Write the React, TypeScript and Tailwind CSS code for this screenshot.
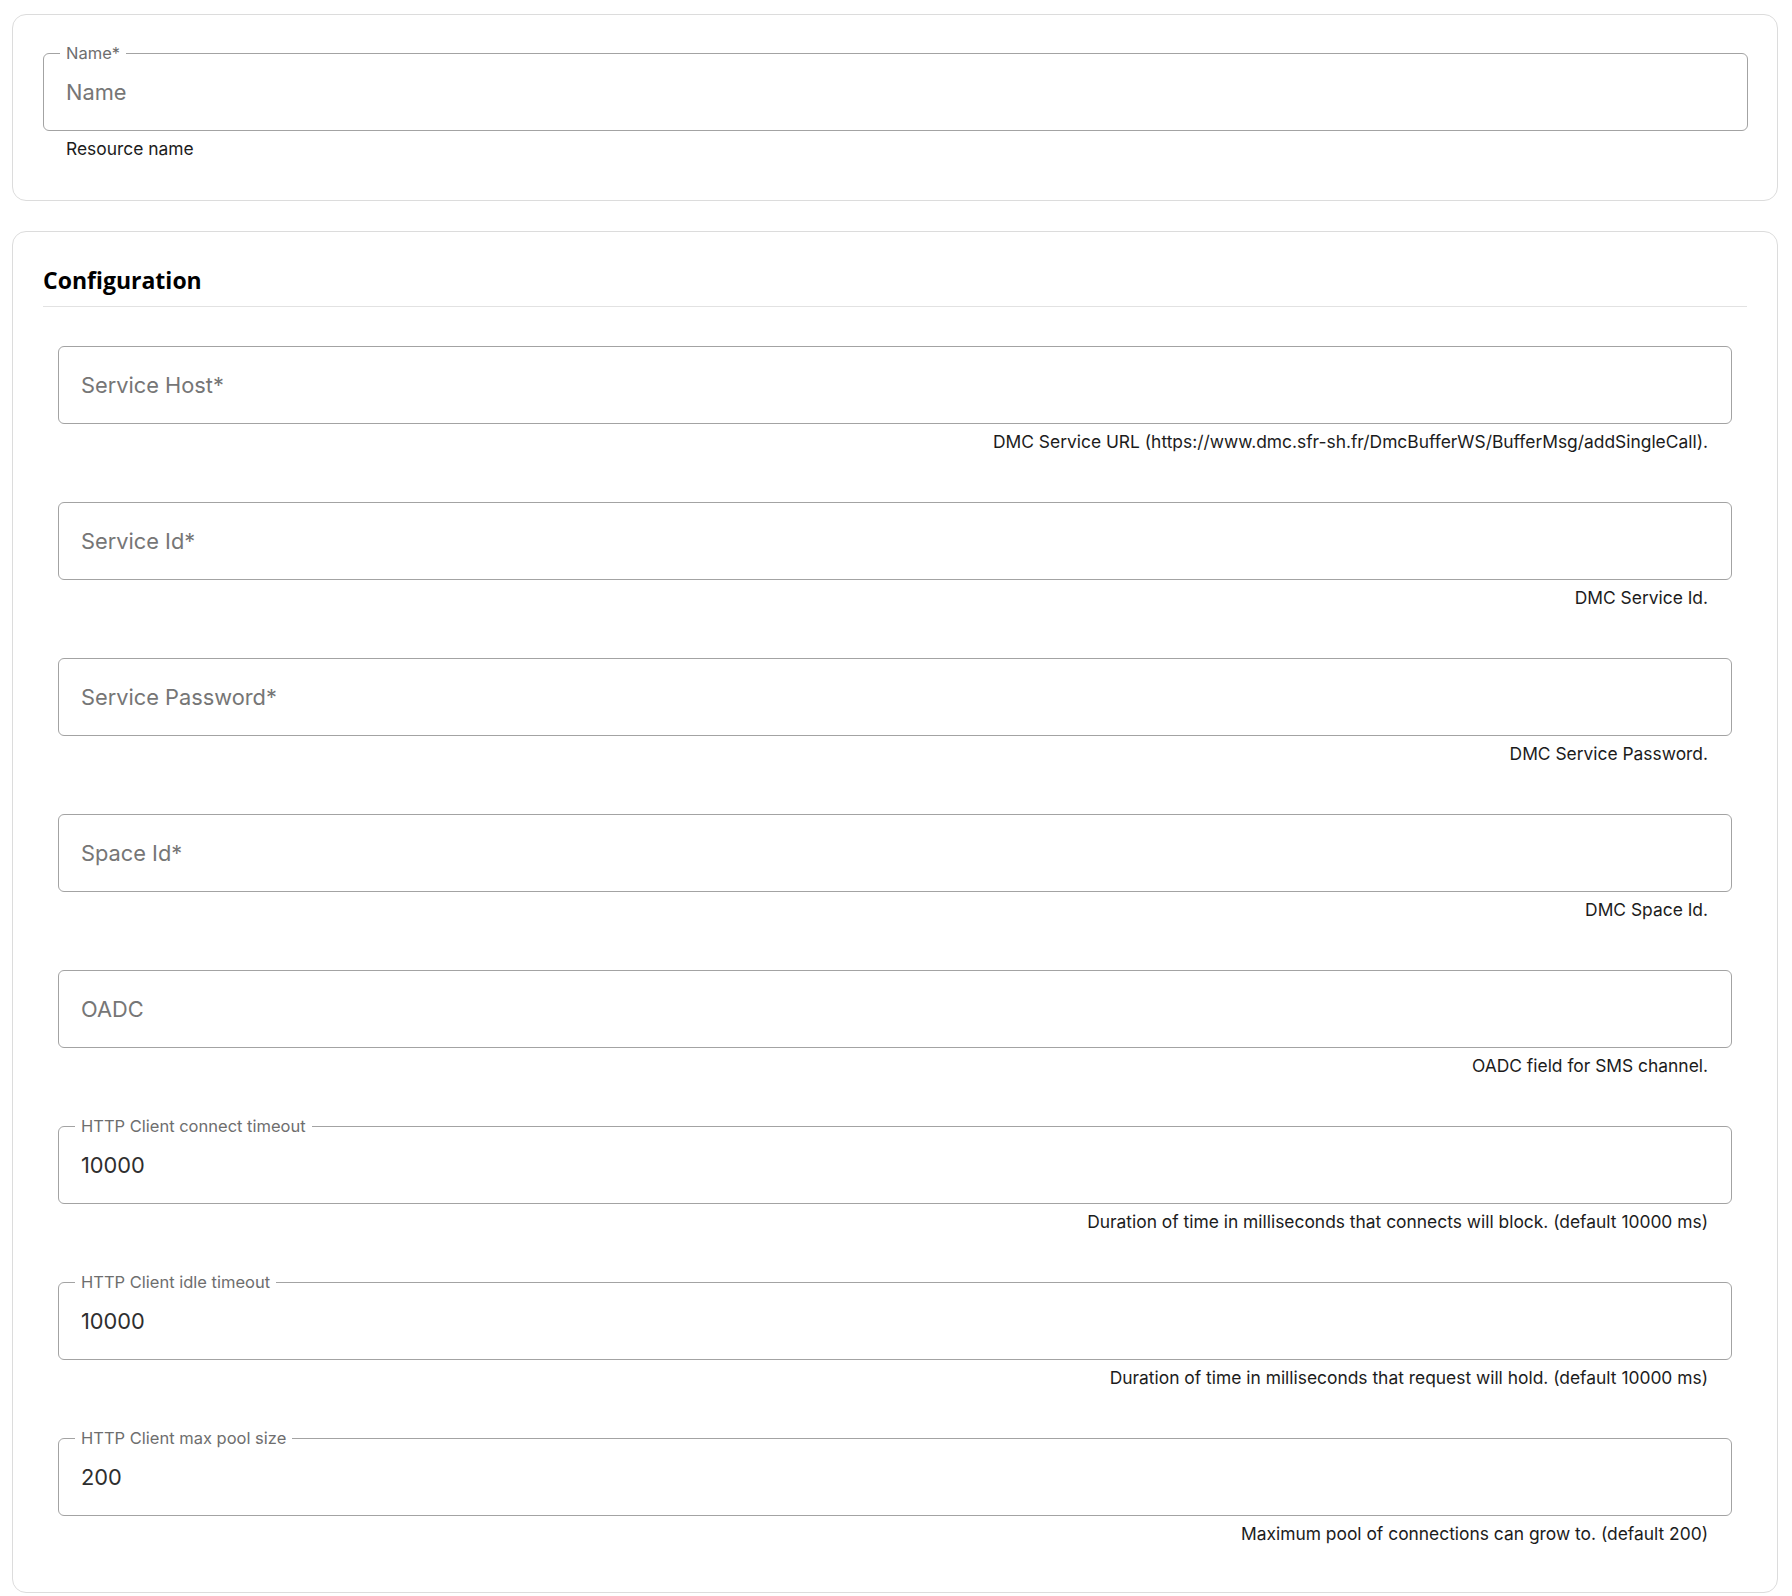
import React from "react";

type FieldProps = {
  label?: string;
  placeholder?: string;
  value?: string;
  helper: string;
  align?: "left" | "right";
};

function OutlinedField({ label, placeholder, value, helper, align = "right" }: FieldProps) {
  return (
    <div className="flex flex-col">
      <div className="relative h-[78px] rounded-[6px] border border-[#a3a3a3]">
        {label && (
          <span className="absolute left-[16px] top-[-11px] bg-white px-[6px] text-[16.5px] leading-[20px] text-[#6e6e6e]">
            {label}
          </span>
        )}
        <input
          readOnly
          defaultValue={value}
          placeholder={placeholder}
          className="h-full w-full rounded-[6px] bg-transparent px-[22px] text-[21.8px] text-[#2e2e2e] outline-none placeholder:text-[#767676]"
        />
      </div>
      <p
        className={`mt-[7px] text-[17.4px] leading-[22px] text-[#1c1c1c] ${
          align === "right" ? "pr-[24px] text-right" : "pl-[23px] text-left"
        }`}
      >
        {helper}
      </p>
    </div>
  );
}

const configFields: FieldProps[] = [
  {
    placeholder: "Service Host*",
    helper: "DMC Service URL (https://www.dmc.sfr-sh.fr/DmcBufferWS/BufferMsg/addSingleCall).",
  },
  { placeholder: "Service Id*", helper: "DMC Service Id." },
  { placeholder: "Service Password*", helper: "DMC Service Password." },
  { placeholder: "Space Id*", helper: "DMC Space Id." },
  { placeholder: "OADC", helper: "OADC field for SMS channel." },
  {
    label: "HTTP Client connect timeout",
    value: "10000",
    helper: "Duration of time in milliseconds that connects will block. (default 10000 ms)",
  },
  {
    label: "HTTP Client idle timeout",
    value: "10000",
    helper: "Duration of time in milliseconds that request will hold. (default 10000 ms)",
  },
  {
    label: "HTTP Client max pool size",
    value: "200",
    helper: "Maximum pool of connections can grow to. (default 200)",
  },
];

export default function App() {
  return (
    <div
      className="min-h-[1596px] bg-white pl-[12px] pr-[14px] pt-[14px]"
      style={{ fontFamily: "Inter, 'Noto Sans', sans-serif" }}
    >
      {/* resource name */}
      <section className="rounded-[14px] border border-[#dcdcdc] pb-[40px] pl-[30px] pr-[29px] pt-[38px]">
        <OutlinedField label="Name*" placeholder="Name" helper="Resource name" align="left" />
      </section>

      {/* configuration */}
      <section className="mt-[30px] rounded-[14px] border border-[#dcdcdc] pb-[47px] pl-[30px] pr-[30px] pt-[33px]">
        <div className="border-b border-[#e2e2e2] pb-[11px]">
          <h2
            className="text-[23px] font-bold leading-[30px] text-black"
            style={{ fontFamily: "'Open Sans', 'Noto Sans', sans-serif" }}
          >
            Configuration
          </h2>
        </div>
        <div className="mt-[39px] flex flex-col gap-[49px] pl-[15px] pr-[15px]">
          {configFields.map((f) => (
            <OutlinedField key={f.placeholder ?? f.label} {...f} />
          ))}
        </div>
      </section>
    </div>
  );
}
